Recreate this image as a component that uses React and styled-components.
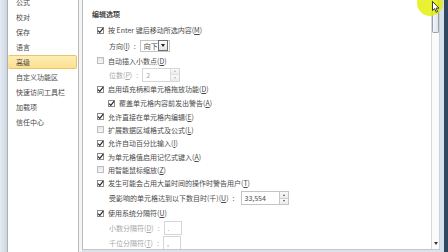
import React from 'react';
import styled, { createGlobalStyle } from 'styled-components';

const GlobalStyle = createGlobalStyle`
	html, body {
		margin: 0;
		padding: 0;
		overflow: hidden;
		background: #dbe3ec;
	}
	body {
		font-family: 'Noto Sans CJK SC', 'Noto Sans', sans-serif;
	}
`;

const Frame = styled.div`
	position: relative;
	display: flex;
	width: 448px;
	height: 252px;
	overflow: hidden;
	background: #dbe3ec;
	font-size: 7px;
	color: #4a4a4a;
`;

const LeftEdge = styled.div`
	width: 7px;
	background: linear-gradient(to right, #e4eaf1, #cdd6e0);
`;

const Nav = styled.ul`
	width: 70px;
	margin: 0;
	padding: 0;
	list-style: none;
	background: #fff;
	border-left: 1px solid #a8b2bd;
	border-right: 1px solid #b8b8b8;
	overflow: hidden;
	li:first-child {
		margin-top: -5px;
	}
`;

const NavItem = styled.li`
	display: flex;
	align-items: center;
	height: 14px;
	margin: 0 1px 1px 0;
	padding-left: 8px;
	border: 1px solid ${(p) => (p.$active ? '#e6c56e' : 'transparent')};
	border-left-width: 0;
	border-radius: 2px;
	background: ${(p) => (p.$active ? 'linear-gradient(#fdedb5, #fbe08e)' : 'transparent')};
	white-space: nowrap;
	box-sizing: border-box;
`;

const Gutter = styled.div`
	width: 3px;
	background: #f4f5f6;
`;

const Pane = styled.div`
	display: flex;
	width: 358px;
	height: 250px;
	background: #fff;
	border-left: 1px solid #bcbcbc;
	border-bottom: 1px solid #c6c6c6;
	box-sizing: border-box;
`;

const Content = styled.div`
	flex: 1;
	display: flex;
	flex-direction: column;
	overflow: hidden;
`;

const Heading = styled.div`
	height: 14px;
	margin: 9px 0 4px 9px;
	display: flex;
	align-items: center;
	font-weight: bold;
	color: #474747;
`;

const Row = styled.div`
	display: flex;
	align-items: center;
	flex-shrink: 0;
	gap: 4px;
	height: ${(p) => p.h}px;
	padding-left: ${(p) => p.indent}px;
	color: ${(p) => (p.$disabled ? '#a8a8a8' : '#4a4a4a')};
	white-space: nowrap;
`;

const Box = styled.span`
	display: inline-flex;
	align-items: center;
	justify-content: center;
	width: 5px;
	height: 5px;
	border: 1px solid ${(p) => (p.$checked ? '#8c8c8c' : '#bdbdbd')};
	background: ${(p) => (p.$checked ? '#fff' : 'linear-gradient(#e6e6e6, #f7f7f7)')};
	flex-shrink: 0;
	svg {
		width: 7px;
		height: 7px;
		overflow: visible;
	}
`;

const Field = styled.span`
	display: inline-flex;
	align-items: center;
	height: ${(p) => p.h || 12}px;
	width: ${(p) => p.w}px;
	margin-left: ${(p) => p.gap || 0}px;
	border: 1px solid ${(p) => (p.$disabled ? '#d6d6d6' : '#c4c4c4')};
	box-sizing: border-box;
	background: #fff;
	color: ${(p) => (p.$disabled ? '#a8a8a8' : '#4a4a4a')};
`;

const FieldText = styled.span`
	flex: 1;
	padding-left: 3px;
`;

const DropButton = styled.span`
	display: inline-flex;
	align-items: center;
	justify-content: center;
	width: 8px;
	height: 9px;
	margin-right: 1px;
	border: 1px solid #6f6f6f;
	background: linear-gradient(#fdfdfd, #e4e4e4);
	&::after {
		content: '';
		border-left: 2px solid transparent;
		border-right: 2px solid transparent;
		border-top: 3px solid #222;
	}
`;

const Spin = styled.span`
	display: inline-flex;
	flex-direction: column;
	width: 8px;
	height: 100%;
	border-left: 1px solid ${(p) => (p.$disabled ? '#dcdcdc' : '#c8c8c8')};
	span {
		flex: 1;
		display: flex;
		align-items: center;
		justify-content: center;
		background: linear-gradient(#fafafa, #ececec);
	}
	span + span {
		border-top: 1px solid ${(p) => (p.$disabled ? '#e0e0e0' : '#cfcfcf')};
	}
	.up::after {
		content: '';
		border-left: 1.5px solid transparent;
		border-right: 1.5px solid transparent;
		border-bottom: 2px solid ${(p) => (p.$disabled ? '#b8b8b8' : '#555')};
	}
	.down::after {
		content: '';
		border-left: 1.5px solid transparent;
		border-right: 1.5px solid transparent;
		border-top: 2px solid ${(p) => (p.$disabled ? '#b8b8b8' : '#555')};
	}
`;

const Scrollbar = styled.div`
	width: 7px;
	display: flex;
	flex-direction: column;
	justify-content: space-between;
	align-items: center;
	background: #fbfbfb;
	border-left: 1px solid #d8d8d8;
	border-right: 1px solid #cfcfcf;
`;

const Thumb = styled.div`
	width: 7px;
	height: 33px;
	box-sizing: border-box;
	border: 1px solid #97a2ae;
	border-top: none;
	border-radius: 0 0 2px 2px;
	background: linear-gradient(to right, #f3f6f9, #dde4ec);
`;

const DownArrow = styled.div`
	margin-bottom: 4px;
	border-left: 2px solid transparent;
	border-right: 2px solid transparent;
	border-top: 3px solid #333;
`;

const RightEdge = styled.div`
	width: 8px;
	display: flex;
	&::before {
		content: '';
		width: 4px;
		background: #d5e1ed;
	}
	&::after {
		content: '';
		width: 4px;
		background: #2f475f;
	}
`;

const Spot = styled.div`
	position: absolute;
	left: 417px;
	top: -10px;
	width: 26px;
	height: 26px;
	border-radius: 50%;
	background: rgba(228, 238, 0, 0.8);
	pointer-events: none;
`;

const Cursor = styled.svg`
	position: absolute;
	left: 432px;
	top: 1px;
	width: 8px;
	height: 12px;
`;

const Key = styled.u`
	text-underline-offset: 1px;
`;

function Label({ text, k }) {
	return (
		<span>
			{text}(<Key>{k}</Key>)
		</span>
	);
}

function Check({ checked }) {
	return (
		<Box $checked={checked}>
			{checked && (
				<svg viewBox='0 0 7 7'>
					<path d='M1 3.6 L2.8 5.4 L6.2 1.2' fill='none' stroke='#2a2a2a' strokeWidth='1.2' />
				</svg>
			)}
		</Box>
	);
}

function CheckRow({ checked, text, k, h = 13, indent = 14 }) {
	return (
		<Row h={h} indent={indent}>
			<Check checked={checked} />
			<Label text={text} k={k} />
		</Row>
	);
}

const navItems = ['公式', '校对', '保存', '语言', '高级', '自定义功能区', '快速访问工具栏', '加载项', '信任中心'];

export default function App() {
	return (
		<Frame>
			<GlobalStyle />
			<LeftEdge />
			<Nav>
				{navItems.map((n) => (
					<NavItem key={n} $active={n === '高级'}>
						{n}
					</NavItem>
				))}
			</Nav>
			<Gutter />
			<Pane>
				<Content>
					<Heading>编辑选项</Heading>
					<CheckRow checked text='按 Enter 键后移动所选内容' k='M' h={14} />
					<Row h={17} indent={26}>
						<Label text='方向' k='I' />
						<span>:</span>
						<Field w={30}>
							<FieldText>向下</FieldText>
							<DropButton />
						</Field>
					</Row>
					<CheckRow text='自动插入小数点' k='D' />
					<Row h={15} indent={26} $disabled>
						<Label text='位数' k='P' />
						<span>:</span>
						<Field w={38} h={14} $disabled>
							<FieldText>2</FieldText>
							<Spin $disabled>
								<span className='up' />
								<span className='down' />
							</Spin>
						</Field>
					</Row>
					<CheckRow checked text='启用填充柄和单元格拖放功能' k='D' h={14} />
					<CheckRow checked text='覆盖单元格内容前发出警告' k='A' h={14} indent={25} />
					<CheckRow checked text='允许直接在单元格内编辑' k='E' />
					<CheckRow text='扩展数据区域格式及公式' k='L' />
					<CheckRow checked text='允许自动百分比输入' k='I' h={14} />
					<CheckRow checked text='为单元格值启用记忆式键入' k='A' />
					<CheckRow text='用智能鼠标缩放' k='Z' />
					<CheckRow checked text='发生可能会占用大量时间的操作时警告用户' k='T' h={14} />
					<Row h={16} indent={26}>
						<Label text='受影响的单元格达到以下数目时(千)' k='U' />
						<span>:</span>
						<Field w={48} h={14} gap={2}>
							<FieldText>33,554</FieldText>
							<Spin>
								<span className='up' />
								<span className='down' />
							</Spin>
						</Field>
					</Row>
					<CheckRow checked text='使用系统分隔符' k='U' h={14} />
					<Row h={15} indent={26} $disabled>
						<Label text='小数分隔符' k='D' />
						<span>:</span>
						<Field w={18} h={14} $disabled>
							<FieldText>.</FieldText>
						</Field>
					</Row>
					<Row h={15} indent={26} $disabled>
						<Label text='千位分隔符' k='T' />
						<span>:</span>
						<Field w={18} h={14} $disabled>
							<FieldText>,</FieldText>
						</Field>
					</Row>
				</Content>
				<Scrollbar>
					<Thumb />
					<DownArrow />
				</Scrollbar>
			</Pane>
			<RightEdge />
			<Spot />
			<Cursor viewBox='0 0 8 12'>
				<path d='M0.5 0.5 L0.5 9.5 L2.6 7.6 L4.2 11.2 L5.6 10.6 L4.1 7.1 L7 7.1 Z' fill='#fff' stroke='#111' strokeWidth='0.8' />
			</Cursor>
		</Frame>
	);
}
